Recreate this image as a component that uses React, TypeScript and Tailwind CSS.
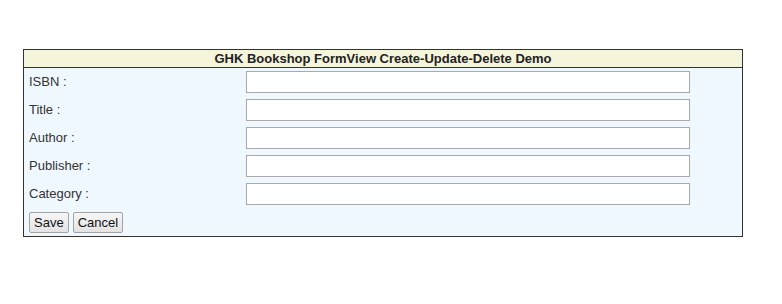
const fields = ["ISBN", "Title", "Author", "Publisher", "Category"];

export default function App() {
  return (
    <div className="min-h-screen bg-white pt-[49px] pl-[23px] font-['Liberation_Sans',Arial,sans-serif] text-[13px]">
      <div className="w-[720px] border border-[#333]">
        <div className="h-[18px] border-b border-[#333] bg-[#f5f5dc] text-center font-bold leading-[17px] text-[#222]">
          GHK Bookshop FormView Create-Update-Delete Demo
        </div>
        <div className="flex flex-col bg-[#f0f8ff] px-[5px] pt-[3px] pb-[3px]">
          <div className="flex flex-col gap-[6px]">
            {fields.map((f) => (
              <div key={f} className="flex h-[22px] items-center">
                <label className="w-[217px] text-[#333]">{f} :</label>
                <input
                  type="text"
                  className="h-[22px] w-[444px] border border-[#a9a9a9] bg-white px-1 outline-none"
                />
              </div>
            ))}
          </div>
          <div className="mt-[7px] flex gap-[4px]">
            <button className="h-[21px] rounded-[2px] border border-[#a3a3a3] bg-gradient-to-b from-[#f6f6f6] to-[#e3e3e3] px-[4px] leading-[19px] text-[#111]">
              Save
            </button>
            <button className="h-[21px] rounded-[2px] border border-[#a3a3a3] bg-gradient-to-b from-[#f6f6f6] to-[#e3e3e3] px-[4px] leading-[19px] text-[#111]">
              Cancel
            </button>
          </div>
        </div>
      </div>
    </div>
  );
}
